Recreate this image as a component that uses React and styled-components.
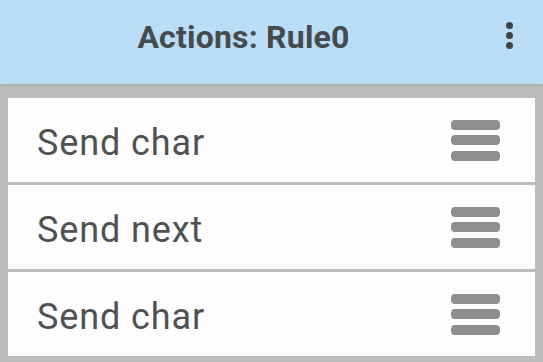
import React from "react";
import styled, { createGlobalStyle } from "styled-components";

const GlobalStyle = createGlobalStyle`
  html, body {
    margin: 0;
    padding: 0;
    background: #bdbebc;
    font-family: Roboto, "Liberation Sans", sans-serif;
    overflow: hidden;
  }
`;

const Screen = styled.div`
  width: 543px;
  height: 362px;
  display: flex;
  flex-direction: column;
  background: #bdbebc;
`;

const Toolbar = styled.div`
  height: 84px;
  box-sizing: border-box;
  padding: 0 56px 10px 0;
  background: #b9ddf7;
  display: flex;
  align-items: center;
  justify-content: center;
  position: relative;
  box-shadow: 0 1px 3px rgba(0, 0, 0, 0.15);
`;

const Title = styled.div`
  font-size: 32px;
  font-weight: bold;
  letter-spacing: 0.2px;
  color: #454a4d;
`;

const MenuButton = styled.div`
  position: absolute;
  right: 30px;
  top: 22px;
  display: flex;
  flex-direction: column;
  gap: 3px;
`;

const Dot = styled.span`
  width: 7px;
  height: 7px;
  border-radius: 50%;
  background: #3f4446;
`;

const List = styled.div`
  margin: 14px 8px 0;
  display: flex;
  flex-direction: column;
  gap: 3px;
`;

const Row = styled.div`
  height: 84px;
  background: #fdfdfd;
  display: flex;
  align-items: center;
  justify-content: space-between;
  padding: 0 35px 0 29px;
`;

const Label = styled.div`
  font-size: 36px;
  letter-spacing: 0.9px;
  color: #4f5253;
  padding-top: 5px;
`;

const Handle = styled.div`
  display: flex;
  flex-direction: column;
  gap: 5.5px;
`;

const Bar = styled.span`
  width: 49px;
  height: 10px;
  border-radius: 4px;
  background: #8d8f8e;
  filter: blur(0.7px);
`;

const actions = ["Send char", "Send next", "Send char"];

export default function App() {
  return (
    <Screen>
      <GlobalStyle />
      <Toolbar>
        <Title>Actions: Rule0</Title>
        <MenuButton>
          <Dot />
          <Dot />
          <Dot />
        </MenuButton>
      </Toolbar>
      <List>
        {actions.map((name, i) => (
          <Row key={i}>
            <Label>{name}</Label>
            <Handle>
              <Bar />
              <Bar />
              <Bar />
            </Handle>
          </Row>
        ))}
      </List>
    </Screen>
  );
}
